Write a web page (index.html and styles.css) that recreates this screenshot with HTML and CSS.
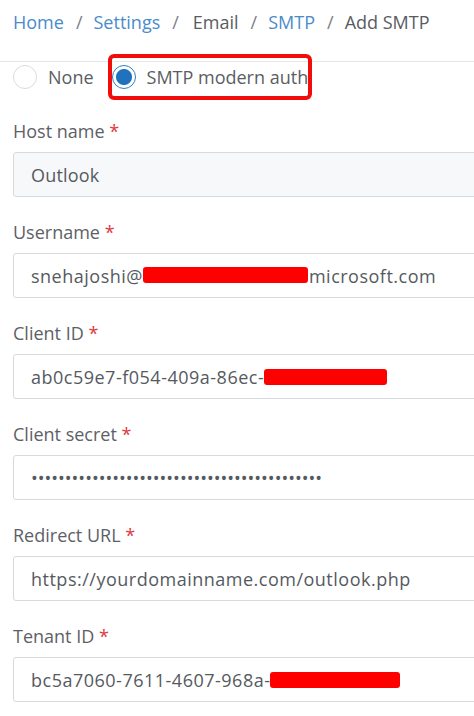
FILE: index.html
```html
<!DOCTYPE html>
<html lang="en">
<head>
<meta charset="utf-8">
<title>Add SMTP</title>
<link rel="stylesheet" href="styles.css">
</head>
<body>
<header class="crumbs">
  <a class="crumb link" href="#">Home</a><span class="sep">/</span>
  <a class="crumb link" href="#">Settings</a><span class="sep">/</span>
  <span class="crumb current wide">Email</span><span class="sep">/</span>
  <a class="crumb link" href="#">SMTP</a><span class="sep">/</span>
  <span class="crumb current">Add SMTP</span>
</header>
<main class="form">
  <div class="radios">
    <label class="option"><span class="radio"></span><span class="opt-text">None</span></label>
    <label class="option marked"><span class="radio checked"></span><span class="opt-text">SMTP modern auth</span></label>
  </div>

  <div class="field">
    <div class="label">Host name <span class="req">*</span></div>
    <div class="input grey">Outlook</div>
  </div>
  <div class="field">
    <div class="label">Username <span class="req">*</span></div>
    <div class="input">snehajoshi@<span class="redact r-user"></span>microsoft.com</div>
  </div>
  <div class="field">
    <div class="label">Client ID <span class="req">*</span></div>
    <div class="input">ab0c59e7-f054-409a-86ec-<span class="redact r-client"></span></div>
  </div>
  <div class="field">
    <div class="label">Client secret <span class="req">*</span></div>
    <div class="input dots">•••••••••••••••••••••••••••••••••••••••••••</div>
  </div>
  <div class="field">
    <div class="label">Redirect URL <span class="req">*</span></div>
    <div class="input">https://yourdomainname.com/outlook.php</div>
  </div>
  <div class="field">
    <div class="label">Tenant ID <span class="req">*</span></div>
    <div class="input">bc5a7060-7611-4607-968a-<span class="redact r-tenant"></span></div>
  </div>
</main>
</body>
</html>
```
FILE: styles.css
```css
html, body {
  margin: 0;
  padding: 0;
  background: #ffffff;
  overflow: hidden;
}
body {
  font-family: "Open Sans", "Noto Sans", sans-serif;
  font-size: 18px;
  color: #555a60;
  width: 474px;
  height: 716px;
}
.crumbs {
  box-sizing: border-box;
  height: 62px;
  padding: 10px 0 0 13px;
  line-height: 24px;
  border-bottom: 1px solid #e4e7eb;
  display: flex;
  align-items: flex-start;
  white-space: nowrap;
}
.crumb { text-decoration: none; }
.link { color: #4a8bcb; }
.current { color: #585c61; }
.wide { padding-left: 3px; }
.sep {
  color: #7d8187;
  padding: 0 11px 0 12px;
}
.form {
  padding-left: 13px;
}
.radios {
  display: flex;
  align-items: center;
  height: 30px;
  gap: 18px;
  position: relative;
}
.option {
  display: flex;
  align-items: center;
  gap: 11px;
  height: 38px;
  color: #5a5e63;
  line-height: 24px;
}
.marked {
  margin: -4px 0;
  padding-right: 0;
  outline: 4px solid #f20d0d;
  border-radius: 2px;
}
.radio {
  box-sizing: border-box;
  width: 24px;
  height: 24px;
  border-radius: 50%;
  border: 1px solid #d9dce0;
  background: #fff;
}
.radio.checked {
  border: 1.5px solid #2f7fc4;
  background: radial-gradient(circle, #1f72bd 0 7.5px, #ffffff 8.5px);
}
.field {
  margin-top: 27px;
  display: flex;
  flex-direction: column;
  gap: 9px;
}
.field + .field { margin-top: 23px; }
.label {
  line-height: 24px;
  color: #5d6166;
}
.req { color: #e0383e; }
.input {
  box-sizing: border-box;
  width: 480px;
  height: 45px;
  border: 1px solid #d6dade;
  border-radius: 3px;
  padding: 0 17px;
  display: flex;
  align-items: center;
  white-space: nowrap;
  color: #555a60;
  background: #ffffff;
  letter-spacing: 0.5px;
}
.input.grey { background: #f7f8fa; letter-spacing: 0.2px; }
.dots { letter-spacing: 0; font-size: 18px; }
.redact {
  display: inline-block;
  height: 16px;
  background: #ff0000;
  border-radius: 3px;
  margin-right: 1px;
}
.r-user { width: 165px; margin-top: -2px; }
.r-client { width: 123px; margin-top: 1px; }
.r-tenant { width: 130px; margin-top: 1px; }
```
